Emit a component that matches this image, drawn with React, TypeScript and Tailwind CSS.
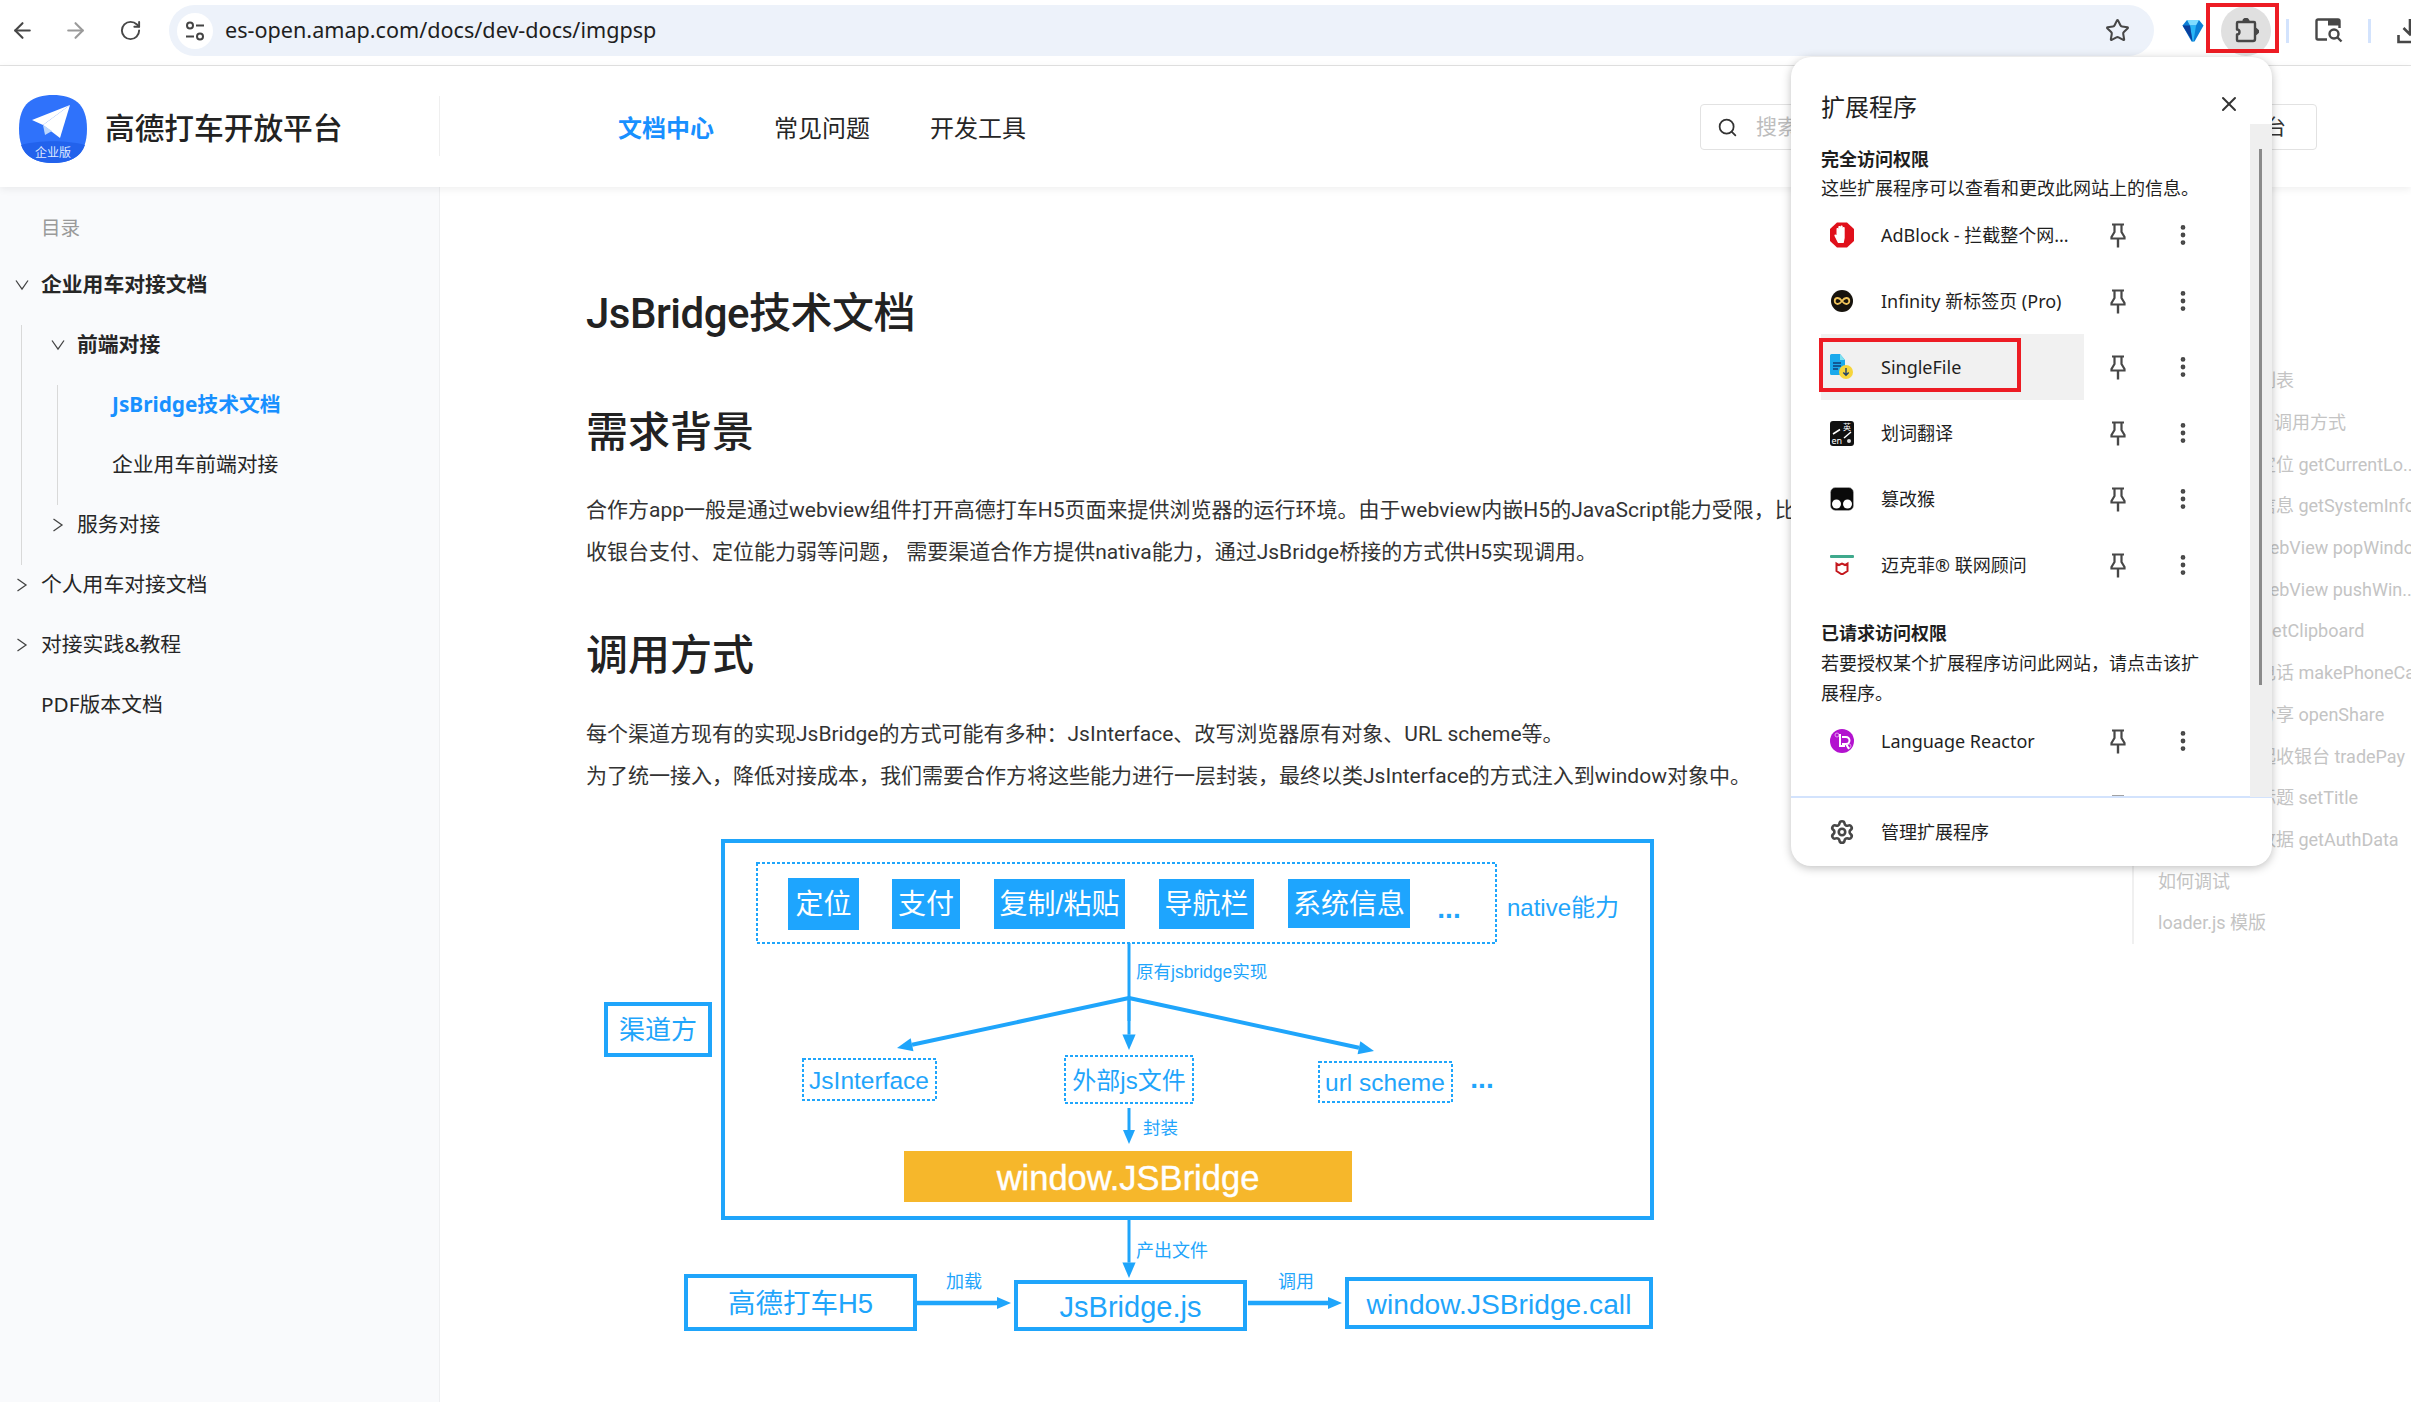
import React from 'react';
import { ArrowLeft, ArrowRight, RotateCw, Star, X, Search, EllipsisVertical, Settings } from 'lucide-react';

const BLUE = '#1fa5fb';

function TuneIcon() {
  return (
    <svg width="24" height="24" viewBox="0 0 24 24" fill="none" stroke="#444" strokeWidth="2">
      <circle cx="7" cy="6.500" r="3" />
      <path d="M13 6.500h8M3 17.500h8" />
      <circle cx="17" cy="17.500" r="3" />
    </svg>
  );
}

function PuzzleIcon() {
  return (
    <svg width="26" height="26" viewBox="0 0 26 26" fill="none" stroke="#474747" strokeWidth="2.400" strokeLinejoin="round">
      <path d="M5 4h16a1 1 0 0 1 1 1v16a2 2 0 0 1-2 2H5a1 1 0 0 1-1-1v-5.500a2.500 2.500 0 0 0 0-5V5a1 1 0 0 1 1-1z" />
      <path d="M10.500 3.500a2.500 2.500 0 0 1 5 0z" fill="#474747" />
      <path d="M23 11l2.500 2.500L23 16z" fill="#474747" />
    </svg>
  );
}

function GemIcon() {
  return (
    <svg width="22" height="23" viewBox="0 0 22 23">
      <path d="M5 1h12l4.500 5.500L12.500 22.500h-3L.5 6.500z" fill="#0b7fd6" />
      <path d="M5 1h12l-3 5.500H8z" fill="#7fdcff" />
      <path d="M8 6.500h6l-2.500 16h-1z" fill="#29b6f6" />
      <path d="M.5 6.500H8l2.500 16z" fill="#0a3f9c" />
    </svg>
  );
}

function TabSearchIcon() {
  return (
    <svg width="28" height="25" viewBox="0 0 28 25" fill="none" stroke="#474747" strokeWidth="2.400">
      <path d="M12 21.500H3A1.500 1.500 0 0 1 1.500 20V3A1.500 1.500 0 0 1 3 1.500h20A1.500 1.500 0 0 1 24.500 3v7" />
      <path d="M13 1.500h12v6H13z" fill="#474747" stroke="none" />
      <circle cx="19" cy="16" r="4.500" />
      <path d="M22.500 19.500l4 4" />
    </svg>
  );
}

function DownloadIcon() {
  return (
    <svg width="26" height="26" viewBox="0 0 26 26" fill="none" stroke="#474747" strokeWidth="2.600">
      <path d="M13 1v15M6.500 10l6.500 6.500 6.500-6.500M1.500 17v7h23" />
    </svg>
  );
}

function PinIcon() {
  return (
    <svg width="16" height="25" viewBox="0 0 16 25" fill="none" stroke="#474747" strokeWidth="2.200" className="shrink-0">
      <path d="M2 1.500h12M4.500 1.500v7.500l-3 5v1.500h13V14l-3-5V1.500" />
      <path d="M8 15.500V24.500" strokeWidth="2.400" />
    </svg>
  );
}

function AdblockIcon() {
  return (
    <svg width="24" height="26" viewBox="0 0 24 26">
      <path d="M7 0.500h10l7 6.500v12l-7 6.500H7L0 19V7z" fill="#e0101b" />
      <path d="M8 21l-3.500-7c-.5-1.500 1-2 2-1V7c0-1.300 1.800-1.300 1.800 0V5c0-1.300 2.200-1.300 2.200 0v-.5c0-1.300 2.200-1.300 2.200 0V6c0-1.200 2-1.200 2 0v10l-1 5z" fill="#fff" />
    </svg>
  );
}

function InfinityIcon() {
  return (
    <svg width="22" height="22" viewBox="0 0 22 22">
      <circle cx="11" cy="11" r="11" fill="#17130d" />
      <path d="M11 11c-1.500-2-2.700-3-4.300-3a3 3 0 0 0 0 6c1.600 0 2.800-1 4.300-3s2.700-3 4.300-3a3 3 0 0 1 0 6c-1.600 0-2.800-1-4.300-3z" fill="none" stroke="#f0c35a" strokeWidth="1.800" />
    </svg>
  );
}

function SingleFileIcon() {
  return (
    <svg width="24" height="26" viewBox="0 0 24 26">
      <path d="M0 1.500A1.500 1.500 0 0 1 1.500 0H10l5 6v15H1.500A1.500 1.500 0 0 1 0 19.500z" fill="#1aa9ec" />
      <path d="M10 0l5 6h-5z" fill="#7fe0f0" />
      <path d="M3 9h8M3 12h8M3 15h5" stroke="#123f7a" strokeWidth="1.300" />
      <circle cx="16" cy="18" r="7" fill="#f6d53b" />
      <path d="M16 14v7M13.300 18.500l2.700 2.700 2.700-2.700" fill="none" stroke="#1f3f6b" strokeWidth="1.400" />
    </svg>
  );
}

function TranslateIcon() {
  return (
    <svg width="24" height="25" viewBox="0 0 24 25">
      <rect width="24" height="25" rx="3" fill="#111" />
      <path d="M3 13l7-4.500M21 11l-7 6" stroke="#fff" strokeWidth="1.500" />
      <text x="13" y="9" fontSize="8" fill="#fff">英</text>
      <text x="1.500" y="23" fontSize="9" fill="#fff">en</text>
      <circle cx="19" cy="20" r="2" fill="#ddd" />
    </svg>
  );
}

function MonkeyIcon() {
  return (
    <svg width="24" height="24" viewBox="0 0 24 24">
      <rect x="0.500" y="0.500" width="23" height="23" rx="5" fill="#0a0a0a" stroke="#bbb" strokeWidth=".5" />
      <circle cx="6.500" cy="17" r="4.500" fill="#fff" />
      <circle cx="17.500" cy="17" r="4.500" fill="#fff" />
    </svg>
  );
}

function McafeeIcon() {
  return (
    <svg width="24" height="20" viewBox="0 0 24 20">
      <rect width="24" height="3" rx="1" fill="#3fa98c" />
      <path d="M6.500 8.500l2.500 1.500L12 8.500l3 1.500 2.500-1.500V16L12 19.500 6.500 16z" fill="none" stroke="#c4171d" strokeWidth="2" />
    </svg>
  );
}

function ReactorIcon() {
  return (
    <svg width="24" height="24" viewBox="0 0 24 24">
      <circle cx="12" cy="12" r="12" fill="#b312cf" />
      <circle cx="7" cy="6" r="2" fill="none" stroke="#e59af0" />
      <circle cx="19" cy="17" r="2" fill="none" stroke="#e59af0" />
      <path d="M10 5v12h5M12 8h4a3 3 0 0 1 0 7h-4M16 15l3 5" fill="none" stroke="#fff" strokeWidth="2" />
    </svg>
  );
}

function PlaneLogo() {
  return (
    <svg width="68" height="68" viewBox="0 0 68 68" className="mt-[1px] shrink-0">
      <path d="M34 0C54 0 68 8 68 34S54 68 34 68 0 60 0 34 14 0 34 0z" fill="#2f72fb" />
      <path d="M2 50c18-5 46-5 64 0-4 12-16 18-32 18S6 62 2 50z" fill="#2262ec" />
      <path d="M51 10L13 25l11 5z" fill="#fff" />
      <path d="M51 10L24 30l17 13z" fill="#fff" />
      <path d="M24 30l2 10 7-4z" fill="#bcd6fb" />
      <text x="34" y="62" fontSize="12" fill="#dfe9ff" textAnchor="middle">企业版</text>
    </svg>
  );
}

function Toolbar() {
  return (
    <div className="flex h-[66px] shrink-0 items-center border-b border-[#e3e3e3] bg-white pb-[4px]">
      <div className="flex h-[44px] w-[44px] shrink-0 items-center justify-center">
        <ArrowLeft size={25} color="#474747" strokeWidth={2} />
      </div>
      <div className="ml-[9px] flex h-[44px] w-[44px] shrink-0 items-center justify-center">
        <ArrowRight size={25} color="#9a9a9a" strokeWidth={2} />
      </div>
      <div className="ml-[11px] flex h-[44px] w-[44px] shrink-0 items-center justify-center">
        <RotateCw size={23} color="#474747" strokeWidth={2} />
      </div>
      <div className="ml-[17px] flex h-[51px] w-[1985px] shrink-0 items-center rounded-full bg-[#edf2fa] pl-[8px] pr-[24px]">
        <div className="flex h-[36px] w-[36px] items-center justify-center rounded-full bg-white">
          <TuneIcon />
        </div>
        <span className="ml-[12px] text-[21.600px] text-[#1f1f1f]">es-open.amap.com/docs/dev-docs/imgpsp</span>
        <Star size={25} color="#474747" strokeWidth={2} className="ml-auto" />
      </div>
      <div className="ml-[14px] flex h-[50px] w-[50px] shrink-0 items-center justify-center">
        <GemIcon />
      </div>
      <div className="relative ml-[3px] flex h-[50px] w-[50px] shrink-0 items-center justify-center rounded-full bg-[#e0e0e0]">
        <PuzzleIcon />
        <div className="absolute left-[-15px] top-[-3px] h-[50px] w-[73px] border-[4px] border-[#ed1c24]" />
      </div>
      <div className="ml-[15px] h-[24px] w-[3px] shrink-0 bg-[#d3e3fd]" />
      <div className="ml-[26px] flex w-[28px] shrink-0 justify-center">
        <TabSearchIcon />
      </div>
      <div className="ml-[25px] h-[24px] w-[3px] shrink-0 bg-[#d3e3fd]" />
      <div className="ml-[26px] shrink-0">
        <DownloadIcon />
      </div>
    </div>
  );
}

function Header() {
  return (
    <div className="relative z-10 flex h-[121px] shrink-0 items-center bg-white pt-[3px] shadow-[0_2px_8px_rgba(0,0,0,0.07)]">
      <div className="ml-[19px] flex">
        <PlaneLogo />
      </div>
      <div className="ml-[18px] w-[240px] whitespace-nowrap text-[29.700px] font-medium text-[#222]">高德打车开放平台</div>
      <div className="mb-[4px] ml-[94px] h-[60px] w-px bg-[#efefef]" />
      <div className="ml-[178px] flex gap-[60px] text-[24px] text-[#262626]">
        <span className="font-bold text-[#1890ff]">文档中心</span>
        <span>常见问题</span>
        <span>开发工具</span>
      </div>
      <div className="mb-[2px] ml-auto mr-[94px] flex items-center gap-[20px]">
        <div className="flex h-[46px] w-[300px] items-center rounded-[4px] border border-[#e2e2e2] pl-[16px]">
          <Search size={21} color="#333" strokeWidth={2} />
          <span className="ml-[18px] text-[21px] text-[#bdbdbd]">搜索</span>
        </div>
        <div className="flex h-[46px] w-[297px] items-center justify-end rounded-[4px] border border-[#e2e2e2] pr-[30px] text-[21px] text-[#333]">
          控制台
        </div>
      </div>
    </div>
  );
}

function TreeRow({ text, indent, chevron, bold, active }: { text: string; indent: string; chevron?: 'down' | 'right'; bold?: boolean; active?: boolean }) {
  return (
    <div className={`relative flex h-[60px] items-center whitespace-nowrap text-[20.800px] ${indent} ${bold ? 'font-bold' : ''} ${active ? 'text-[#1890ff]' : 'text-[#262626]'}`}>
      {chevron === 'down' && (
        <svg width="14" height="12" viewBox="0 0 14 12" fill="none" stroke="#444" strokeWidth="1.300" className="absolute ml-[-26px]">
          <path d="M1 1.500L7 10l6-8.500" />
        </svg>
      )}
      {chevron === 'right' && (
        <svg width="12" height="14" viewBox="0 0 12 14" fill="none" stroke="#444" strokeWidth="1.300" className="absolute ml-[-25px]">
          <path d="M1.500 1L10 7l-8.500 6" />
        </svg>
      )}
      {text}
    </div>
  );
}

function Sidebar() {
  return (
    <div className="relative w-[440px] shrink-0 border-r border-[#eeeff1] bg-[#f9fafc] pt-[10px]">
      <div className="flex h-[58px] items-center pl-[41px] pt-1 text-[19.600px] text-[#9a9a9a]">目录</div>
      <TreeRow text="企业用车对接文档" indent="pl-[41px]" chevron="down" bold />
      <TreeRow text="前端对接" indent="pl-[77px]" chevron="down" bold />
      <TreeRow text="JsBridge技术文档" indent="pl-[112px]" bold active />
      <TreeRow text="企业用车前端对接" indent="pl-[112px]" />
      <TreeRow text="服务对接" indent="pl-[77px]" chevron="right" />
      <TreeRow text="个人用车对接文档" indent="pl-[41px]" chevron="right" />
      <TreeRow text="对接实践&教程" indent="pl-[41px]" chevron="right" />
      <TreeRow text="PDF版本文档" indent="pl-[41px]" />
      <div className="absolute left-[21px] top-[138px] h-[240px] w-px bg-[#d9d9d9]" />
      <div className="absolute left-[57px] top-[198px] h-[120px] w-px bg-[#d9d9d9]" />
    </div>
  );
}

function Arrow({ x1, y1, x2, y2, w = 3, head = 11 }: { x1: number; y1: number; x2: number; y2: number; w?: number; head?: number }) {
  const len = Math.hypot(x2 - x1, y2 - y1);
  const ux = (x2 - x1) / len;
  const uy = (y2 - y1) / len;
  const bx = x2 - ux * head * 1.4;
  const by = y2 - uy * head * 1.4;
  const half = head * 0.6;
  const pts = `${x2},${y2} ${bx - uy * half},${by + ux * half} ${bx + uy * half},${by - ux * half}`;
  return (
    <g>
      <line x1={x1} y1={y1} x2={bx} y2={by} stroke={BLUE} strokeWidth={w} />
      <polygon points={pts} fill={BLUE} />
    </g>
  );
}

function Chip({ x, y, w, h, label }: { x: number; y: number; w: number; h: number; label: string }) {
  return (
    <g>
      <rect x={x} y={y} width={w} height={h} fill="#1ea5fe" />
      <text x={x + w / 2} y={y + h / 2 + 10} fontSize="28" fill="#fff" textAnchor="middle">{label}</text>
    </g>
  );
}

function Dashed({ x, y, w, h }: { x: number; y: number; w: number; h: number }) {
  return <rect x={x} y={y} width={w} height={h} fill="none" stroke={BLUE} strokeWidth="2" strokeDasharray="3 2" />;
}

function Boxed({ x, y, w, h, label, size, ty }: { x: number; y: number; w: number; h: number; label: string; size: number; ty: number }) {
  return (
    <g>
      <rect x={x} y={y} width={w} height={h} fill="#fff" stroke={BLUE} strokeWidth="4" />
      <text x={x + w / 2} y={ty} fontSize={size} fill={BLUE} textAnchor="middle">{label}</text>
    </g>
  );
}

// the flow chart in the doc, coordinates are page pixels
function Diagram() {
  return (
    <svg
      width="1060"
      height="500"
      viewBox="600 835 1060 500"
      className="ml-[14px] mt-[39px] block [font-family:'Liberation_Sans','Noto_Sans_CJK_SC',sans-serif]"
    >
      <rect x="723" y="840" width="929" height="377" fill="#fff" stroke={BLUE} strokeWidth="4" />
      <Dashed x={757} y={862} w={739} h={80} />
      <Chip x={788} y={877} w={71} h={52} label="定位" />
      <Chip x={892} y={878} w={68} h={50} label="支付" />
      <Chip x={994} y={878} w={131} h={50} label="复制/粘贴" />
      <Chip x={1159} y={878} w={95} h={50} label="导航栏" />
      <Chip x={1288} y={878} w={122} h={49} label="系统信息" />
      <text x="1449" y="917" fontSize="28" fontWeight="700" fill={BLUE} textAnchor="middle">...</text>
      <text x="1507" y="915" fontSize="24" fill={BLUE}>native能力</text>

      <line x1="1129" y1="942" x2="1129" y2="1020" stroke={BLUE} strokeWidth="3" />
      <text x="1136" y="977" fontSize="17.500" fill={BLUE}>原有jsbridge实现</text>
      <Arrow x1={1129} y1={997} x2={1129} y2={1049} w={3} head={11} />
      <Arrow x1={1129} y1={997} x2={897} y2={1047} w={4} head={11} />
      <Arrow x1={1129} y1={997} x2={1374} y2={1050} w={4} head={11} />

      <Boxed x={606} y={1003} w={104} h={51} label="渠道方" size={26} ty={1038} />

      <Dashed x={803} y={1058} w={133} h={41} />
      <text x="869" y="1088" fontSize="24.500" fill={BLUE} textAnchor="middle">JsInterface</text>
      <Dashed x={1065} y={1055} w={128} h={47} />
      <text x="1129" y="1088" fontSize="24" fill={BLUE} textAnchor="middle">外部js文件</text>
      <Dashed x={1319} y={1061} w={133} h={40} />
      <text x="1385" y="1090" fontSize="24.500" fill={BLUE} textAnchor="middle">url scheme</text>
      <text x="1482" y="1087" fontSize="28" fontWeight="700" fill={BLUE} textAnchor="middle">...</text>

      <Arrow x1={1129} y1={1107} x2={1129} y2={1143} w={3} head={10} />
      <text x="1143" y="1133" fontSize="17.500" fill={BLUE}>封装</text>

      <rect x="904" y="1150" width="448" height="51" fill="#f6b72b" />
      <text x="1128" y="1189" fontSize="34.500" fill="#fff" stroke="#fff" strokeWidth=".4" textAnchor="middle">window.JSBridge</text>

      <Arrow x1={1129} y1={1217} x2={1129} y2={1277} w={3} head={11} />
      <text x="1136" y="1256" fontSize="18" fill={BLUE}>产出文件</text>

      <Boxed x={686} y={1275} w={229} h={53} label="高德打车H5" size={27.500} ty={1312} />
      <text x="946" y="1287" fontSize="18" fill={BLUE}>加载</text>
      <Arrow x1={917} y1={1302} x2={1011} y2={1302} w={4.500} head={10} />
      <Boxed x={1016} y={1281} w={229} h={47} label="JsBridge.js" size={29} ty={1316} />
      <text x="1278" y="1287" fontSize="18" fill={BLUE}>调用</text>
      <Arrow x1={1248} y1={1302} x2={1342} y2={1302} w={4.500} head={10} />
      <Boxed x={1347} y={1278} w={304} h={48} label="window.JSBridge.call" size={28.200} ty={1313} />
    </svg>
  );
}

function Content() {
  const h = 'text-[42px] leading-[60px] font-medium text-[#222]';
  const p = 'whitespace-nowrap text-[21px] leading-[42px] text-[#333]';
  return (
    <div className="min-w-0 flex-1 pl-[146px] pt-[97px] [font-family:Roboto,'Noto_Sans_CJK_SC',sans-serif]">
      <h1 className={`tracking-[-0.5px] ${h}`}>JsBridge技术文档</h1>
      <h2 className={`mt-[59px] ${h}`}>需求背景</h2>
      <div className="mt-[26px]">
        <p className={p}>合作方app一般是通过webview组件打开高德打车H5页面来提供浏览器的运行环境。由于webview内嵌H5的JavaScript能力受限，比</p>
        <p className={p}>收银台支付、定位能力弱等问题， 需要渠道合作方提供nativa能力，通过JsBridge桥接的方式供H5实现调用。</p>
      </div>
      <h2 className={`mt-[53px] ${h}`}>调用方式</h2>
      <div className="mt-[27px]">
        <p className={p}>每个渠道方现有的实现JsBridge的方式可能有多种：JsInterface、改写浏览器原有对象、URL scheme等。</p>
        <p className={p}>为了统一接入，降低对接成本，我们需要合作方将这些能力进行一层封装，最终以类JsInterface的方式注入到window对象中。</p>
      </div>
      <Diagram />
    </div>
  );
}

const tocItems = [
  { text: '列表', pad: 'pl-[124px]' },
  { text: '调用方式', pad: 'pl-[140px]' },
  { text: '定位 getCurrentLo...', pad: 'pl-[124px]' },
  { text: '信息 getSystemInfo', pad: 'pl-[124px]' },
  { text: 'WebView popWindow', pad: 'pl-[120px]' },
  { text: 'WebView pushWin...', pad: 'pl-[120px]' },
  { text: 'getClipboard', pad: 'pl-[128px]' },
  { text: '电话 makePhoneCall', pad: 'pl-[124px]' },
  { text: '分享 openShare', pad: 'pl-[124px]' },
  { text: '起收银台 tradePay', pad: 'pl-[124px]' },
  { text: '标题 setTitle', pad: 'pl-[124px]' },
  { text: '数据 getAuthData', pad: 'pl-[124px]' },
  { text: '如何调试', pad: 'pl-[24px]' },
  { text: 'loader.js 模版', pad: 'pl-[24px]' },
];

function Toc() {
  return (
    <div className="w-[279px] shrink-0 pt-[173px] [font-family:Roboto,'Noto_Sans_CJK_SC',sans-serif]">
      <div className="border-l-2 border-[#f0f0f0]">
        {tocItems.map((item) => (
          <div key={item.text} className={`flex h-[41.700px] items-center whitespace-nowrap text-[18px] text-[#c4c4c4] ${item.pad}`}>
            {item.text}
          </div>
        ))}
      </div>
    </div>
  );
}

function ExtRow({ icon, label, hover }: { icon: React.ReactNode; label: string; hover?: boolean }) {
  return (
    <div className="relative flex h-[66px] items-center">
      <div className={`flex h-full w-[263px] items-center ${hover ? 'bg-[#f1f1f1]' : ''}`}>
        <div className="flex w-[42px] justify-center">{icon}</div>
        <span className="ml-[18px] whitespace-nowrap text-[18px] text-[#1f1f1f]">{label}</span>
      </div>
      <div className="flex w-[68px] justify-center">
        <PinIcon />
      </div>
      <div className="flex w-[62px] justify-center">
        <EllipsisVertical size={26} color="#474747" strokeWidth={2.400} />
      </div>
      {hover && <div className="absolute left-[-2px] top-[4px] h-[54px] w-[202px] border-[4px] border-[#ed1c24]" />}
    </div>
  );
}

function ExtensionsPopup() {
  return (
    <div className="absolute left-[1791px] top-[57px] z-20 flex h-[809px] w-[481px] flex-col overflow-hidden rounded-[20px] bg-white shadow-[0_2px_10px_rgba(0,0,0,0.25)]">
      <div className="absolute right-0 top-[67px] h-[673px] w-[22px] bg-[#efefef]">
        <div className="ml-[9px] mt-[25px] h-[536px] w-[3px] bg-[#8a8a8a]" />
      </div>
      <div className="h-[739px] shrink-0 overflow-hidden pl-[30px] pt-[30px]">
        <div className="relative flex h-[40px] items-center">
          <span className="text-[24px] text-[#1f1f1f]">扩展程序</span>
          <X size={24} color="#333" strokeWidth={2} className="absolute left-[396px] top-[5px]" />
        </div>
        <div className="mt-[17px] text-[18px] font-bold leading-[30px] text-[#1f1f1f]">完全访问权限</div>
        <div className="mt-[-1px] text-[18px] leading-[30px] text-[#1f1f1f]">这些扩展程序可以查看和更改此网站上的信息。</div>
        <div className="mt-[-1px]">
          <ExtRow icon={<AdblockIcon />} label="AdBlock - 拦截整个网..." />
          <ExtRow icon={<InfinityIcon />} label="Infinity 新标签页 (Pro)" />
          <ExtRow icon={<SingleFileIcon />} label="SingleFile" hover />
          <ExtRow icon={<TranslateIcon />} label="划词翻译" />
          <ExtRow icon={<MonkeyIcon />} label="篡改猴" />
          <ExtRow icon={<McafeeIcon />} label="迈克菲® 联网顾问" />
        </div>
        <div className="mt-[20px] text-[18px] font-bold leading-[30px] text-[#1f1f1f]">已请求访问权限</div>
        <div className="w-[390px] text-[18px] leading-[30px] text-[#1f1f1f]">若要授权某个扩展程序访问此网站，请点击该扩展程序。</div>
        <ExtRow icon={<ReactorIcon />} label="Language Reactor" />
        <ExtRow icon={<span />} label="" />
      </div>
      <div className="flex flex-1 items-center border-t-2 border-[#d3e3fd] pl-[30px]">
        <div className="flex w-[42px] justify-center">
          <Settings size={26} color="#474747" strokeWidth={2.400} />
        </div>
        <span className="ml-[18px] text-[18px] text-[#1f1f1f]">管理扩展程序</span>
      </div>
    </div>
  );
}

export default function App() {
  return (
    <div className="relative flex h-[1402px] w-[2411px] flex-col overflow-hidden bg-white [font-family:'Noto_Sans','Noto_Sans_CJK_SC',sans-serif]">
      <Toolbar />
      <Header />
      <div className="flex min-h-0 flex-1">
        <Sidebar />
        <Content />
        <Toc />
      </div>
      <ExtensionsPopup />
    </div>
  );
}
